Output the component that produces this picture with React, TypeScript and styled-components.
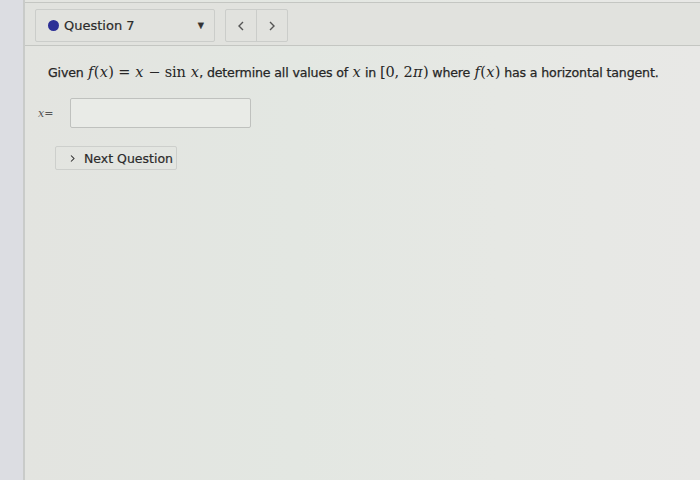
import React from "react";
import styled, { createGlobalStyle } from "styled-components";

const Global = createGlobalStyle`
  html, body { margin: 0; padding: 0; }
  body {
    width: 700px;
    height: 480px;
    overflow: hidden;
    background: #dedfe3;
    font-family: "DejaVu Sans", "Liberation Sans", sans-serif;
  }
`;

const Page = styled.div`
  display: flex;
  width: 700px;
  height: 480px;
`;

const SideStrip = styled.div`
  width: 23px;
  flex-shrink: 0;
  background: #dcdde2;
  border-right: 2px solid #c9cbc9;
`;

const Main = styled.div`
  flex: 1;
  display: flex;
  flex-direction: column;
  background: linear-gradient(90deg, #e3e4e0 0%, #e3e7e2 40%, #e6e8e4 70%, #e8e8e6 100%);
`;

const TopBar = styled.div`
  margin-top: 2px;
  height: 39px;
  padding: 0 0 3px 10px;
  border-top: 1px solid #c4c6c2;
  border-bottom: 1px solid #c4c6c2;
  display: flex;
  align-items: flex-end;
  gap: 10px;
  background: #e1e2de;
`;

const Dropdown = styled.div`
  width: 180px;
  height: 33px;
  border: 1px solid #cbcdca;
  border-radius: 2px;
  display: flex;
  align-items: center;
  padding: 0 10px 0 12px;
  box-sizing: border-box;
  font-size: 13px;
  color: #2b2b2b;
  -webkit-text-stroke: 0.2px #2b2b2b;
`;

const Dot = styled.span`
  width: 11px;
  height: 11px;
  border-radius: 50%;
  background: #2c2f96;
  margin-right: 5px;
`;

const Caret = styled.span`
  margin-left: auto;
  font-size: 8px;
  color: #333;
`;

const NavGroup = styled.div`
  display: flex;
  height: 31px;
  border: 1px solid #cbcdca;
  border-radius: 2px;
`;

const NavButton = styled.div<{ $first?: boolean }>`
  width: 30px;
  display: flex;
  align-items: center;
  justify-content: center;
  color: #555;
  border-right: ${(p) => (p.$first ? "1px solid #cbcdca" : "none")};
`;

const Content = styled.div`
  padding: 18px 0 0 23px;
  display: flex;
  flex-direction: column;
`;

const Prompt = styled.div`
  font-size: 12.6px;
  color: #262626;
  -webkit-text-stroke: 0.25px #262626;
  letter-spacing: -0.15px;
  white-space: nowrap;
`;

const M = styled.span`
  font-family: "DejaVu Serif", "Liberation Serif", serif;
  font-style: italic;
  font-size: 14.5px;
  margin: 0 0.5px;
  -webkit-text-stroke: 0;
`;

const R = styled.span`
  font-family: "DejaVu Serif", "Liberation Serif", serif;
  font-size: 14.5px;
  -webkit-text-stroke: 0;
`;

const AnswerRow = styled.div`
  display: flex;
  align-items: center;
  margin-top: 18px;
  margin-left: -10px;
`;

const Label = styled.span`
  font-family: "DejaVu Serif", "Liberation Serif", serif;
  font-style: italic;
  font-size: 11px;
  color: #555;
  width: 32px;
`;

const Input = styled.div`
  width: 179px;
  height: 28px;
  border: 1px solid #bfc1be;
  border-radius: 2px;
  background: #e9ebe7;
`;

const NextButton = styled.div`
  margin-top: 18px;
  margin-left: 7px;
  width: 122px;
  height: 24px;
  border: 1px solid #cdcfcc;
  border-radius: 2px;
  display: flex;
  align-items: center;
  gap: 7px;
  padding-left: 12px;
  box-sizing: border-box;
  font-size: 12.5px;
  color: #2b2b2b;
  -webkit-text-stroke: 0.2px #2b2b2b;
`;

const Chevron: React.FC<{ dir: "left" | "right"; size?: number }> = ({ dir, size = 12 }) => (
  <svg width={size} height={size} viewBox="0 0 12 12" fill="none" stroke="currentColor" strokeWidth="1.4">
    {dir === "left" ? <path d="M8 2 L4 6 L8 10" /> : <path d="M4 2 L8 6 L4 10" />}
  </svg>
);

export default function App() {
  return (
    <>
      <Global />
      <Page>
        <SideStrip />
        <Main>
          <TopBar>
            <Dropdown>
              <Dot />
              Question 7
              <Caret>▼</Caret>
            </Dropdown>
            <NavGroup>
              <NavButton $first>
                <Chevron dir="left" />
              </NavButton>
              <NavButton>
                <Chevron dir="right" />
              </NavButton>
            </NavGroup>
          </TopBar>
          <Content>
            <Prompt>
              Given <M>f</M><R>(</R><M>x</M><R>) = </R><M>x</M><R> − sin </R><M>x</M>, determine all values of <M>x</M> in{" "}
              <R>[0, 2</R><M>π</M><R>)</R> where <M>f</M><R>(</R><M>x</M><R>)</R> has a horizontal tangent.
            </Prompt>
            <AnswerRow>
              <Label>x=</Label>
              <Input />
            </AnswerRow>
            <NextButton>
              <Chevron dir="right" size={9} />
              Next Question
            </NextButton>
          </Content>
        </Main>
      </Page>
    </>
  );
}
